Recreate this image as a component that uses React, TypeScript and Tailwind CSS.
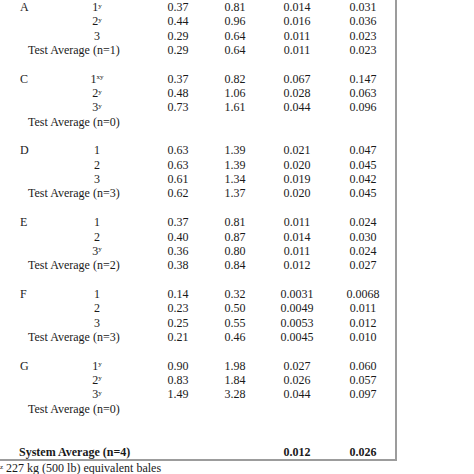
import React from 'react';

type Row = [string, string, string, string, string, string];

type Group = {
  name: string;
  rows: Row[];
  avg: string[];
};

const groups: Group[] = [
  {
    name: 'A',
    rows: [
      ['1', 'y', '0.37', '0.81', '0.014', '0.031'],
      ['2', 'y', '0.44', '0.96', '0.016', '0.036'],
      ['3', '', '0.29', '0.64', '0.011', '0.023'],
    ],
    avg: ['n=1', '0.29', '0.64', '0.011', '0.023'],
  },
  {
    name: 'C',
    rows: [
      ['1', 'xy', '0.37', '0.82', '0.067', '0.147'],
      ['2', 'y', '0.48', '1.06', '0.028', '0.063'],
      ['3', 'y', '0.73', '1.61', '0.044', '0.096'],
    ],
    avg: ['n=0'],
  },
  {
    name: 'D',
    rows: [
      ['1', '', '0.63', '1.39', '0.021', '0.047'],
      ['2', '', '0.63', '1.39', '0.020', '0.045'],
      ['3', '', '0.61', '1.34', '0.019', '0.042'],
    ],
    avg: ['n=3', '0.62', '1.37', '0.020', '0.045'],
  },
  {
    name: 'E',
    rows: [
      ['1', '', '0.37', '0.81', '0.011', '0.024'],
      ['2', '', '0.40', '0.87', '0.014', '0.030'],
      ['3', 'y', '0.36', '0.80', '0.011', '0.024'],
    ],
    avg: ['n=2', '0.38', '0.84', '0.012', '0.027'],
  },
  {
    name: 'F',
    rows: [
      ['1', '', '0.14', '0.32', '0.0031', '0.0068'],
      ['2', '', '0.23', '0.50', '0.0049', '0.011'],
      ['3', '', '0.25', '0.55', '0.0053', '0.012'],
    ],
    avg: ['n=3', '0.21', '0.46', '0.0045', '0.010'],
  },
  {
    name: 'G',
    rows: [
      ['1', 'y', '0.90', '1.98', '0.027', '0.060'],
      ['2', 'y', '0.83', '1.84', '0.026', '0.057'],
      ['3', 'y', '1.49', '3.28', '0.044', '0.097'],
    ],
    avg: ['n=0'],
  },
];

const grid = 'grid grid-cols-[60px_74px_88px_26px_98px_34px] h-[14.35px] leading-[14.35px]';

function Values({ vals }: { vals: string[] }) {
  return (
    <>
      {[0, 1, 2, 3].map(i => (
        <div key={i} className="text-center whitespace-nowrap">
          {vals[i] ?? ''}
        </div>
      ))}
    </>
  );
}

export default function App() {
  return (
    <div className="w-[474px] h-[474px] bg-white text-[#1a1a1a] text-[12px] overflow-hidden font-['Liberation_Serif','Times_New_Roman',serif]">
      <div className="w-[397px] border-r-2 border-b-2 border-[#9c9c9c]">
        {groups.map((g, gi) => (
          <div key={g.name}>
            {gi > 0 && <div className="h-[14.35px]" />}
            {g.rows.map((r, ri) => (
              <div key={ri} className={grid}>
                <div className="pl-[20px]">{ri === 0 ? g.name : ''}</div>
                <div className="text-center whitespace-nowrap">
                  {r[0]}
                  {r[1] && <sup className="text-[7px]">{r[1]}</sup>}
                </div>
                <Values vals={r.slice(2)} />
              </div>
            ))}
            <div className={grid}>
              <div className="col-span-2 pl-[28px] whitespace-nowrap">
                Test Average ({g.avg[0]})
              </div>
              <Values vals={g.avg.slice(1)} />
            </div>
          </div>
        ))}
        <div className="h-[28.7px]" />
        <div className={grid + ' font-bold'}>
          <div className="col-span-2 pl-[19px] whitespace-nowrap">System Average (n=4)</div>
          <Values vals={['', '', '0.012', '0.026']} />
        </div>
      </div>
      <div className="leading-[14px] whitespace-nowrap">
        <sup className="text-[7px]">z</sup> 227 kg (500 lb) equivalent bales
      </div>
    </div>
  );
}
